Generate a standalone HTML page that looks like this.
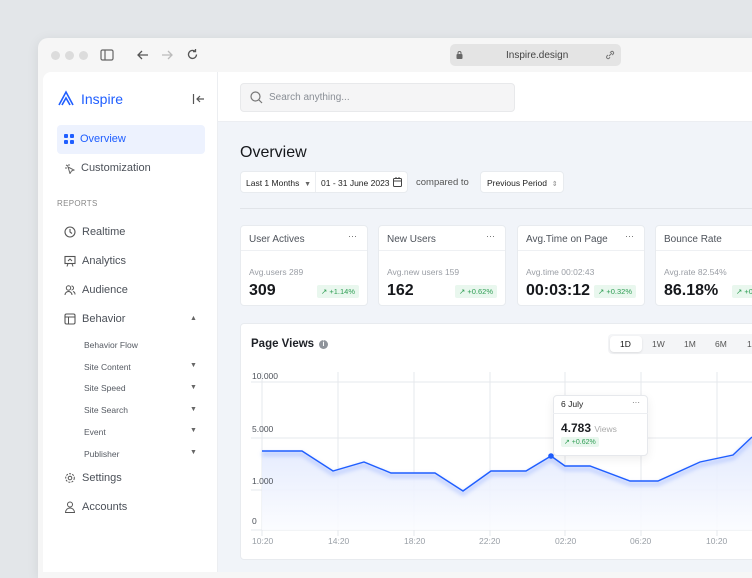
<!DOCTYPE html>
<html><head><meta charset="utf-8"><style>
*{margin:0;padding:0;box-sizing:border-box}
body{width:752px;height:564px;overflow:hidden;background:#e3e6e9;font-family:"Liberation Sans",sans-serif;position:relative;color:#1f2329}
.a{position:absolute}
.win{left:38px;top:38px;width:720px;height:540px;background:#f6f6f6;border-radius:10px 0 0 0;box-shadow:0 2px 12px rgba(0,0,0,.08)}
.dot{width:9px;height:9px;border-radius:50%;background:#dcdcdc;top:51px}
.side{left:43px;top:72px;width:175px;height:500px;background:#fff;border-radius:8px 0 0 0;border-right:1px solid #eceef1}
.nav{left:57px;font-size:11px;color:#4b5058;display:flex;align-items:center}
.nav svg{margin-right:6px}
.sub{left:84px;font-size:8.5px;color:#555a62}
.tri{left:190px;font-size:7px;color:#666}
.main{left:218px;top:122px;width:540px;height:450px;background:#f1f4f9}
.card{background:#fff;border:1px solid #e8ebef;border-radius:4px}
.stat{top:225px;width:128px;height:81px}
.stat .t{position:absolute;left:8px;top:8px;font-size:10px;color:#4e535b}
.stat .m{position:absolute;right:10px;top:5px;font-size:9px;color:#666}
.stat .hr{position:absolute;left:0;right:0;top:24px;border-top:1px solid #eef0f3}
.stat .s{position:absolute;left:8px;top:41px;font-size:8.5px;color:#9a9ea5}
.stat .v{position:absolute;left:8px;top:56px;font-size:16px;font-weight:bold;color:#16181c}
.stat .b{position:absolute;right:8px;top:59px;font-size:7.5px;color:#2f9e54;background:#e9f7ee;padding:2px 4px;border-radius:2px}
.yl{left:252px;font-size:8.5px;color:#4e535b}
.xl{top:536px;font-size:8.5px;color:#9aa0a7}
</style></head><body>
<div class="a win"></div>
<div class="a dot" style="left:51px"></div><div class="a dot" style="left:65px"></div><div class="a dot" style="left:79px"></div>
<svg class="a" style="left:100px;top:49px" width="14" height="12"><rect x="1" y="1" width="12" height="10" rx="1.5" fill="none" stroke="#666" stroke-width="1.2"/><line x1="5" y1="1" x2="5" y2="11" stroke="#666" stroke-width="1.2"/></svg>
<svg class="a" style="left:136px;top:49px" width="14" height="12"><path d="M12 6H2M6 2L2 6l4 4" fill="none" stroke="#555" stroke-width="1.3"/></svg>
<svg class="a" style="left:160px;top:49px" width="14" height="12"><path d="M2 6h10M8 2l4 4-4 4" fill="none" stroke="#bbb" stroke-width="1.3"/></svg>
<svg class="a" style="left:186px;top:48px" width="13" height="13"><path d="M10.5 6.5a4 4 0 1 1-1.5-3.2M9.5 1v2.6H7" fill="none" stroke="#555" stroke-width="1.3"/></svg>
<div class="a" style="left:450px;top:44px;width:171px;height:22px;background:#e4e4e4;border-radius:5px"></div>
<svg class="a" style="left:456px;top:51px" width="7" height="8"><rect x="0.5" y="3" width="6" height="5" rx="1" fill="#666"/><path d="M2 3V2a1.5 1.5 0 0 1 3 0v1" fill="none" stroke="#666"/></svg>
<div class="a" style="left:506px;top:50px;font-size:10px;color:#444">Inspire.design</div>
<svg class="a" style="left:605px;top:50px" width="10" height="10"><path d="M4 6l3-3M3 5L1.8 6.2a1.6 1.6 0 0 0 2.2 2.2L5 7.2M5 2.8L6.2 1.6a1.6 1.6 0 0 1 2.2 2.2L7.2 5" fill="none" stroke="#777" stroke-width="1"/></svg>

<div class="a side"></div>
<svg class="a" style="left:58px;top:90px" width="17" height="16"><path d="M1 15L8 2l7 13M4 15L8 8l4 7" fill="none" stroke="#1f5eff" stroke-width="1.6"/></svg>
<div class="a" style="left:81px;top:91px;font-size:14px;color:#1f5eff">Inspire</div>
<svg class="a" style="left:192px;top:93px" width="13" height="12"><path d="M1.5 1v10M12 6H5M8 3L5 6l3 3" fill="none" stroke="#555" stroke-width="1.2"/></svg>
<div class="a" style="left:57px;top:125px;width:148px;height:29px;background:#edf2fe;border-radius:4px"></div>
<div class="a nav" style="top:133px;left:64px;color:#1f5eff"><svg width="10" height="10"><rect x="0" y="0" width="4" height="4" rx="1" fill="#1f5eff"/><rect x="6" y="0" width="4" height="4" rx="1" fill="#1f5eff"/><rect x="0" y="6" width="4" height="4" rx="1" fill="#1f5eff"/><rect x="6" y="6" width="4" height="4" rx="1" fill="#1f5eff"/></svg>Overview</div>
<div class="a nav" style="top:162px;left:64px"><svg width="11" height="11"><path d="M2 2l2 1M1 5h2M5 1v2M4 4l6 3-2.5 1L6 10.5z" fill="none" stroke="#666" stroke-width="1"/></svg>Customization</div>
<div class="a" style="left:57px;top:199px;font-size:8px;color:#888;letter-spacing:.3px">REPORTS</div>
<div class="a nav" style="top:226px;left:64px"><svg width="12" height="12"><circle cx="6" cy="6" r="5" fill="none" stroke="#555" stroke-width="1.1"/><path d="M6 3v3l2 1.5" fill="none" stroke="#555" stroke-width="1.1"/></svg>Realtime</div>
<div class="a nav" style="top:255px;left:64px"><svg width="12" height="12"><rect x="1" y="1.5" width="10" height="7" fill="none" stroke="#555" stroke-width="1.1"/><path d="M4 8.5l-1 3M8 8.5l1 3M4 6l2-2 2 2" fill="none" stroke="#555" stroke-width="1"/></svg>Analytics</div>
<div class="a nav" style="top:284px;left:64px"><svg width="12" height="12"><circle cx="4.5" cy="4" r="2.2" fill="none" stroke="#555" stroke-width="1"/><path d="M1 11a3.5 3.5 0 0 1 7 0M7.5 2a2 2 0 0 1 0 4M9 7.5a3 3 0 0 1 2 3" fill="none" stroke="#555" stroke-width="1"/></svg>Audience</div>
<div class="a nav" style="top:313px;left:64px"><svg width="12" height="12"><rect x="1" y="1" width="10" height="10" rx="1.5" fill="none" stroke="#555" stroke-width="1.1"/><path d="M1 4h10M4.5 4v7" stroke="#555" stroke-width="1"/></svg>Behavior</div>
<div class="a tri" style="top:315px">▲</div>
<div class="a sub" style="top:340px">Behavior Flow</div>
<div class="a sub" style="top:362px">Site Content</div><div class="a tri" style="top:362px">▼</div>
<div class="a sub" style="top:383px">Site Speed</div><div class="a tri" style="top:384px">▼</div>
<div class="a sub" style="top:405px">Site Search</div><div class="a tri" style="top:406px">▼</div>
<div class="a sub" style="top:427px">Event</div><div class="a tri" style="top:427px">▼</div>
<div class="a sub" style="top:449px">Publisher</div><div class="a tri" style="top:449px">▼</div>
<div class="a nav" style="top:472px;left:64px"><svg width="12" height="12"><circle cx="6" cy="6" r="1.8" fill="none" stroke="#555"/><circle cx="6" cy="6" r="4.3" fill="none" stroke="#555" stroke-dasharray="2 1.2"/></svg>Settings</div>
<div class="a nav" style="top:501px;left:64px"><svg width="12" height="12"><circle cx="6" cy="3.5" r="2.5" fill="none" stroke="#555"/><path d="M1.5 11.5a4.5 4.5 0 0 1 9 0z" fill="none" stroke="#555"/></svg>Accounts</div>

<div class="a" style="left:218px;top:72px;width:540px;height:50px;background:#fff;border-bottom:1px solid #eceef2"></div>
<div class="a" style="left:240px;top:83px;width:275px;height:29px;background:#f5f5f6;border:1px solid #e8e9eb;border-radius:4px"></div>
<svg class="a" style="left:250px;top:91px" width="13" height="13"><circle cx="5.5" cy="5.5" r="4.5" fill="none" stroke="#777" stroke-width="1.2"/><path d="M9 9l3 3" stroke="#777" stroke-width="1.2"/></svg>
<div class="a" style="left:269px;top:92px;font-size:10px;color:#8a8f96">Search anything...</div>

<div class="a main"></div>
<div class="a" style="left:240px;top:144px;font-size:16px;color:#16181c">Overview</div>
<div class="a card" style="left:240px;top:171px;width:168px;height:22px"></div>
<div class="a" style="left:315px;top:172px;width:1px;height:20px;background:#eceef1"></div>
<div class="a" style="left:246px;top:178px;font-size:8.5px;color:#222">Last 1 Months &nbsp;<span style="font-size:7px;color:#666">▼</span></div>
<div class="a" style="left:321px;top:178px;font-size:8.5px;color:#222">01 - 31 June 2023</div>
<svg class="a" style="left:393px;top:177px" width="9" height="10"><rect x="0.5" y="1.5" width="8" height="8" rx="1" fill="none" stroke="#444"/><path d="M0.5 4h8M3 0v2M6 0v2" stroke="#444"/></svg>
<div class="a" style="left:416px;top:177px;font-size:9.5px;color:#555">compared to</div>
<div class="a card" style="left:480px;top:171px;width:84px;height:22px"></div>
<div class="a" style="left:487px;top:178px;font-size:8.5px;color:#222">Previous Period &nbsp;<span style="color:#888;font-size:7px">⇕</span></div>
<div class="a" style="left:240px;top:208px;width:520px;height:1px;background:#e1e4e9"></div>

<div class="a card stat" style="left:240px"><div class="t">User Actives</div><div class="m">···</div><div class="hr"></div><div class="s">Avg.users 289</div><div class="v">309</div><div class="b">↗ +1.14%</div></div>
<div class="a card stat" style="left:378px"><div class="t">New Users</div><div class="m">···</div><div class="hr"></div><div class="s">Avg.new users 159</div><div class="v">162</div><div class="b">↗ +0.62%</div></div>
<div class="a card stat" style="left:517px"><div class="t">Avg.Time on Page</div><div class="m">···</div><div class="hr"></div><div class="s">Avg.time 00:02:43</div><div class="v">00:03:12</div><div class="b">↗ +0.32%</div></div>
<div class="a card stat" style="left:655px"><div class="t">Bounce Rate</div><div class="m">···</div><div class="hr"></div><div class="s">Avg.rate 82.54%</div><div class="v">86.18%</div><div class="b">↗ +0.41%</div></div>

<div class="a card" style="left:240px;top:323px;width:530px;height:237px"></div>
<div class="a" style="left:251px;top:338px;font-size:11.5px;font-weight:bold;color:#1d2026">Page Views</div>
<div class="a" style="left:319px;top:340px;width:9px;height:9px;border-radius:50%;background:#8f949b;color:#fff;font-size:7px;text-align:center;line-height:9px;font-weight:bold">i</div>
<div class="a" style="left:608px;top:334px;width:150px;height:20px;background:#f4f5f7;border-radius:4px"></div>
<div class="a" style="left:610px;top:336px;width:32px;height:16px;background:#fff;border-radius:4px;box-shadow:0 1px 2px rgba(0,0,0,.1)"></div>
<div class="a" style="left:620px;top:339px;font-size:8.5px;color:#111">1D</div>
<div class="a" style="left:652px;top:339px;font-size:8.5px;color:#555">1W</div>
<div class="a" style="left:684px;top:339px;font-size:8.5px;color:#555">1M</div>
<div class="a" style="left:715px;top:339px;font-size:8.5px;color:#555">6M</div>
<div class="a" style="left:747px;top:339px;font-size:8.5px;color:#555">1Y</div>

<svg class="a" style="left:240px;top:360px" width="520" height="180">
<defs><linearGradient id="g" x1="0" y1="0" x2="0" y2="1"><stop offset="0" stop-color="#dfe7fd"/><stop offset="1" stop-color="#fbfcff"/></linearGradient>
<filter id="f"><feGaussianBlur stdDeviation="2"/></filter></defs>
<g stroke="#e6e8ec" stroke-width="1">
<line x1="11" y1="22" x2="520" y2="22"/><line x1="11" y1="78" x2="520" y2="78"/><line x1="11" y1="130" x2="520" y2="130"/><line x1="11" y1="170" x2="520" y2="170"/>
<line x1="22" y1="12" x2="22" y2="176"/><line x1="98" y1="12" x2="98" y2="176"/><line x1="174" y1="12" x2="174" y2="176"/><line x1="250" y1="12" x2="250" y2="176"/><line x1="325" y1="12" x2="325" y2="176"/><line x1="401" y1="12" x2="401" y2="176"/><line x1="477" y1="12" x2="477" y2="176"/>
</g>
<path d="M22 91L62 91L93 111L124 102L151 113L195 113L223 131L251 111L286 111L311 96L325 106L350 106L390 121L418 121L460 102L493 95L512 77L512 170L22 170Z" fill="url(#g)" opacity=".9"/>
<path d="M22 94L62 94L93 114L124 105L151 116L195 116L223 134L251 114L286 114L311 99L325 109L350 109L390 124L418 124L460 105L493 98L512 80" fill="none" stroke="#9fb6ff" stroke-width="3" filter="url(#f)" opacity=".7"/>
<path d="M22 91L62 91L93 111L124 102L151 113L195 113L223 131L251 111L286 111L311 96L325 106L350 106L390 121L418 121L460 102L493 95L512 77" fill="none" stroke="#1f5eff" stroke-width="1.4"/>
<circle cx="311" cy="96" r="2.8" fill="#1f5eff"/>
</svg>
<div class="a yl" style="top:371px">10.000</div>
<div class="a yl" style="top:424px">5.000</div>
<div class="a yl" style="top:476px">1.000</div>
<div class="a yl" style="top:516px">0</div>
<div class="a xl" style="left:252px">10:20</div>
<div class="a xl" style="left:328px">14:20</div>
<div class="a xl" style="left:404px">18:20</div>
<div class="a xl" style="left:479px">22:20</div>
<div class="a xl" style="left:555px">02:20</div>
<div class="a xl" style="left:630px">06:20</div>
<div class="a xl" style="left:706px">10:20</div>

<div class="a" style="left:553px;top:395px;width:95px;height:61px;background:#fff;border:1px solid #e6e8ec;border-radius:4px;box-shadow:0 3px 10px rgba(0,0,0,.07)"></div>
<div class="a" style="left:553px;top:413px;width:95px;height:1px;background:#eceef1"></div>
<div class="a" style="left:561px;top:399px;font-size:8.5px;color:#222">6 July</div>
<div class="a" style="left:632px;top:398px;font-size:8px;color:#666">···</div>
<div class="a" style="left:561px;top:421px;font-size:12px;font-weight:bold;color:#1a1c20">4.783 <span style="font-size:8.5px;font-weight:normal;color:#aaa">Views</span></div>
<div class="a" style="left:561px;top:437px;font-size:7px;color:#2f9e54;background:#e9f7ee;padding:1px 3px;border-radius:2px">↗ +0.62%</div>
</body></html>
